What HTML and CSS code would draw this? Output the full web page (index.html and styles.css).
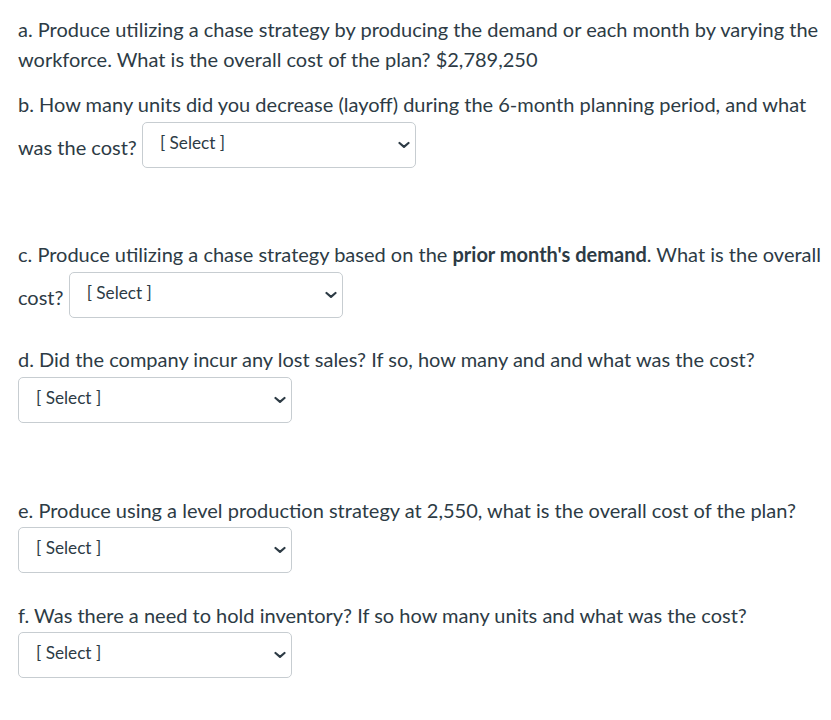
FILE: index.html
```html
<!DOCTYPE html>
<html lang="en">
<head>
<meta charset="utf-8">
<title>Question</title>
<link rel="stylesheet" href="styles.css">
</head>
<body>
<div class="question">
  <p>a. Produce utilizing a chase strategy by producing the demand or each month by varying the workforce. What is the overall cost of the plan? $2,789,250</p>
  <p>b. How many units did you decrease (layoff) during the 6-month planning period, and what was the cost? <span class="select"><span class="select-text">[ Select ]</span><svg class="chev" width="12" height="8" viewBox="0 0 12 8"><path d="M1.5 2 L6 5.8 L10.5 2" fill="none" stroke="#2d3b45" stroke-width="2.2" stroke-linecap="round" stroke-linejoin="round"/></svg></span></p>
  <p class="blank">&nbsp;</p>
  <p>c. Produce utilizing a chase strategy based on the <strong>prior month's demand</strong>. What is the overall cost? <span class="select"><span class="select-text">[ Select ]</span><svg class="chev" width="12" height="8" viewBox="0 0 12 8"><path d="M1.5 2 L6 5.8 L10.5 2" fill="none" stroke="#2d3b45" stroke-width="2.2" stroke-linecap="round" stroke-linejoin="round"/></svg></span></p>
  <p>d. Did the company incur any lost sales? If so, how many and and what was the cost? <span class="select"><span class="select-text">[ Select ]</span><svg class="chev" width="12" height="8" viewBox="0 0 12 8"><path d="M1.5 2 L6 5.8 L10.5 2" fill="none" stroke="#2d3b45" stroke-width="2.2" stroke-linecap="round" stroke-linejoin="round"/></svg></span></p>
  <p class="blank">&nbsp;</p>
  <p>e. Produce using a level production strategy at 2,550, what is the overall cost of the plan? <span class="select"><span class="select-text">[ Select ]</span><svg class="chev" width="12" height="8" viewBox="0 0 12 8"><path d="M1.5 2 L6 5.8 L10.5 2" fill="none" stroke="#2d3b45" stroke-width="2.2" stroke-linecap="round" stroke-linejoin="round"/></svg></span></p>
  <p>f. Was there a need to hold inventory? If so how many units and what was the cost? <span class="select"><span class="select-text">[ Select ]</span><svg class="chev" width="12" height="8" viewBox="0 0 12 8"><path d="M1.5 2 L6 5.8 L10.5 2" fill="none" stroke="#2d3b45" stroke-width="2.2" stroke-linecap="round" stroke-linejoin="round"/></svg></span></p>
</div>
</body>
</html>
```

FILE: styles.css
```css
html, body {
  margin: 0;
  padding: 0;
  background: #ffffff;
}

body {
  font-family: Lato, "Open Sans", "Liberation Sans", sans-serif;
  font-size: 20px;
  line-height: 30px;
  color: #2d3b45;
}

.question {
  padding: 14px 6px 0 18px;
}

.question p {
  margin: 0 0 15px;
}

.question strong {
  font-weight: 700;
}

.select {
  display: inline-flex;
  align-items: center;
  justify-content: space-between;
  box-sizing: border-box;
  width: 274px;
  height: 46px;
  margin: 2.5px 0 11.7px;
  padding: 0 5px 0 17px;
  border: 1px solid #c7cdd1;
  border-radius: 5px;
  background: #ffffff;
  vertical-align: 4.3px;
  font-size: 17.2px;
  line-height: 20px;
}

.select-text {
  position: relative;
  top: -2px;
}

.chev {
  display: block;
}
```
